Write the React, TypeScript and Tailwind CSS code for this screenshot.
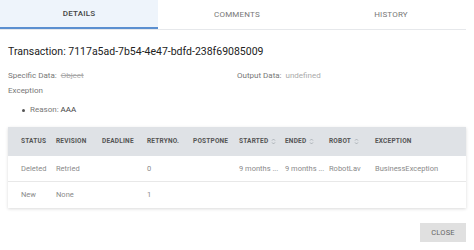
import React from "react";

const cols = "grid grid-cols-[35px_46px_45px_46px_46px_46px_44px_46px_1fr]";

function Sort() {
  return (
    <svg width="5" height="7" viewBox="0 0 5 7" className="ml-[3px] inline-block">
      <path d="M1 2.6 L2.5 1 L4 2.6" fill="none" stroke="#9aa0a6" strokeWidth="0.7" />
      <path d="M1 4.4 L2.5 6 L4 4.4" fill="none" stroke="#9aa0a6" strokeWidth="0.7" />
    </svg>
  );
}

export default function App() {
  const headers: [string, boolean][] = [
    ["STATUS", false],
    ["REVISION", false],
    ["DEADLINE", false],
    ["RETRYNO.", false],
    ["POSTPONE", false],
    ["STARTED", true],
    ["ENDED", true],
    ["ROBOT", true],
    ["EXCEPTION", false],
  ];
  const rows = [
    ["Deleted", "Retried", "", "0", "", "9 months ...", "9 months ...", "RobotLav", "BusinessException"],
    ["New", "None", "", "1", "", "", "", "", ""],
  ];
  return (
    <div className="w-[474px] h-[250px] bg-white relative overflow-hidden" style={{ fontFamily: "Roboto, 'Liberation Sans', sans-serif" }}>
      <div className="flex h-[30px] border-b border-[#e6e8eb] w-[466px]">
        <div className="w-[158px] flex items-center justify-center bg-[#eef4fb] border-b-2 border-[#5b8fd0] text-[8px] font-medium text-[#444] tracking-[0.2px]">DETAILS</div>
        <div className="w-[158px] flex items-center justify-center text-[8px] text-[#777] tracking-[0.2px]">COMMENTS</div>
        <div className="w-[150px] flex items-center justify-center text-[8px] text-[#777] tracking-[0.2px]">HISTORY</div>
      </div>
      <div className="px-2">
        <div className="mt-[15px] text-[10.5px] text-[#222] leading-[14px]">Transaction: 7117a5ad-7b54-4e47-bdfd-238f69085009</div>
        <div className="mt-[12px] flex text-[8px] leading-[10px] text-[#777]">
          <div className="w-[229px]">
            Specific Data:&nbsp; <span className="line-through text-[#aaa]">Object</span>
          </div>
          <div>
            Output Data:&nbsp; <span className="text-[#aaa]">undefined</span>
          </div>
        </div>
        <div className="mt-[5px] text-[8px] leading-[10px] text-[#777]">Exception</div>
        <div className="mt-[9px] ml-[14px] flex items-center text-[8px] leading-[10px] text-[#777]">
          <span className="w-[3px] h-[3px] rounded-full bg-[#555] mr-[5px]" />
          Reason: <span className="text-[#444] ml-[2px]">AAA</span>
        </div>
        <div className="mt-[12px] w-[458px] bg-white shadow-[0_1px_3px_rgba(0,0,0,0.15)]">
          <div className={`${cols} h-[29px] items-center bg-[#dfe2e6] pl-[13px] text-[6.5px] font-bold text-[#555] tracking-[0.2px]`}>
            {headers.map(([h, s]) => (
              <div key={h} className="flex items-center">
                {h}
                {s && <Sort />}
              </div>
            ))}
          </div>
          {rows.map((r, i) => (
            <div key={i} className={`${cols} h-[26px] items-center pl-[13px] text-[7.5px] text-[#8a8a8a] ${i === 0 ? "border-b border-[#e8e8e8]" : ""}`}>
              {r.map((c, j) => (
                <div key={j} className="whitespace-nowrap">{c}</div>
              ))}
            </div>
          ))}
        </div>
        <div className="mt-[15px] flex justify-end w-[458px]">
          <div className="w-[46px] h-[19px] bg-[#e0e0e0] flex items-center justify-center text-[7.5px] text-[#666] tracking-[0.2px]">CLOSE</div>
        </div>
      </div>
    </div>
  );
}
